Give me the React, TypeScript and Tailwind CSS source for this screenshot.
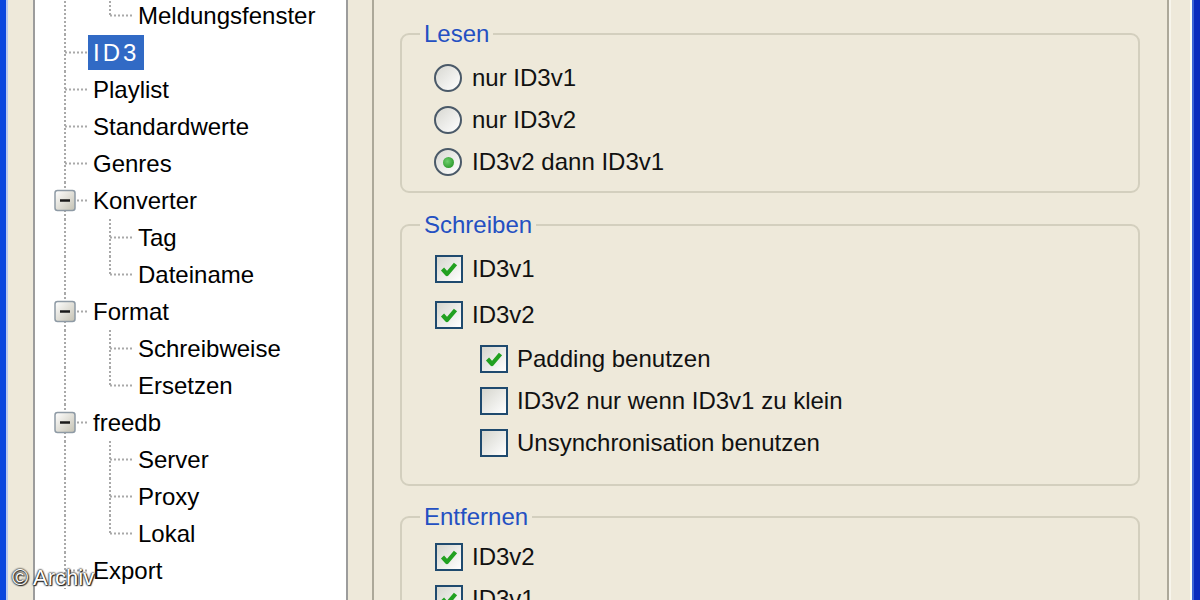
import type { ReactNode } from 'react'

type TreeNode = {
  label: string
  level: 0 | 1
  expander?: boolean
  last?: boolean
  selected?: boolean
}

const tree: TreeNode[] = [
  { label: 'Meldungsfenster', level: 1, last: true },
  { label: 'ID3', level: 0, selected: true },
  { label: 'Playlist', level: 0 },
  { label: 'Standardwerte', level: 0 },
  { label: 'Genres', level: 0 },
  { label: 'Konverter', level: 0, expander: true },
  { label: 'Tag', level: 1 },
  { label: 'Dateiname', level: 1, last: true },
  { label: 'Format', level: 0, expander: true },
  { label: 'Schreibweise', level: 1 },
  { label: 'Ersetzen', level: 1, last: true },
  { label: 'freedb', level: 0, expander: true },
  { label: 'Server', level: 1 },
  { label: 'Proxy', level: 1 },
  { label: 'Lokal', level: 1, last: true },
  { label: 'Export', level: 0 },
]

const dot = { stroke: '#a9a9a9', strokeWidth: 2, strokeDasharray: '2 2' }

// dotted connector lines + the [-] box, drawn per row
function TreeGuides({ node, id }: { node: TreeNode; id: number }) {
  const w = node.level === 0 ? 53 : 98
  return (
    <svg width={w} height={37} className="shrink-0">
      <defs>
        <linearGradient id={`exp-${id}`} x1="0" y1="0" x2="1" y2="1">
          <stop offset="0" stopColor="#ffffff" />
          <stop offset="1" stopColor="#c4c1b2" />
        </linearGradient>
      </defs>
      <line x1={30} y1={0} x2={30} y2={37} {...dot} />
      {node.level === 0 && <line x1={30} y1={18.5} x2={53} y2={18.5} {...dot} />}
      {node.level === 1 && (
        <>
          <line x1={75} y1={0} x2={75} y2={node.last ? 18.5 : 37} {...dot} />
          <line x1={75} y1={18.5} x2={98} y2={18.5} {...dot} />
        </>
      )}
      {node.expander && (
        <>
          <rect x={20} y={8.5} width={20} height={20} rx={2.5} fill={`url(#exp-${id})`} stroke="#8e9aa5" strokeWidth={1.5} />
          <line x1={25} y1={18.5} x2={35} y2={18.5} stroke="#1a1a1a" strokeWidth={2.5} />
        </>
      )}
    </svg>
  )
}

function Radio({ checked, label }: { checked?: boolean; label: string }) {
  return (
    <div className="flex h-[42px] items-center gap-[10px]">
      <span className="flex h-[28px] w-[28px] items-center justify-center rounded-full border-2 border-[#4a5968] bg-linear-to-br from-[#d8d8d2] to-white">
        {checked && (
          <span className="h-[11px] w-[11px] rounded-full bg-[radial-gradient(circle_at_40%_40%,#6fcf6f,#188a18)]" />
        )}
      </span>
      <span>{label}</span>
    </div>
  )
}

function Check({ checked, label, h = 'h-[42px]', indent }: { checked?: boolean; label: string; h?: string; indent?: boolean }) {
  return (
    <div className={`flex items-center gap-[9px] ${h} ${indent ? 'ml-[45px]' : ''}`}>
      <span className="flex h-[28px] w-[28px] items-center justify-center border-2 border-[#1f4a6e] bg-linear-to-br from-[#d6d6ce] to-white">
        {checked && (
          <svg width="22" height="22" viewBox="0 0 22 22">
            <path d="M4.5 11 L9 16 L17.5 6" fill="none" stroke="#21a121" strokeWidth="4.2" strokeLinejoin="round" />
          </svg>
        )}
      </span>
      <span>{label}</span>
    </div>
  )
}

function GroupBox({ title, className, children }: { title: string; className: string; children: ReactNode }) {
  return (
    <fieldset className="m-0 min-w-0 rounded-[9px] border-2 border-[#d3cfbe] p-0">
      <legend className="ml-[18px] px-[4px] text-[24px] leading-[26px] text-[#2450c2]">{title}</legend>
      <div className={className}>{children}</div>
    </fieldset>
  )
}

export default function App() {
  return (
    <div className="relative flex h-[600px] w-[1200px] overflow-hidden bg-[#eee9da] font-['Liberation_Sans',Arial,sans-serif] text-[24px] text-[#111]">
      {/* window frame left */}
      <div className="flex w-[8px] shrink-0">
        <div className="w-[6px] bg-[#0a46de]" />
        <div className="w-[2px] bg-[#b9c8ee]" />
      </div>
      <div className="w-[25px] shrink-0" />

      {/* tree view */}
      <div className="w-[315px] shrink-0 border-x-2 border-[#9c9c9c] bg-white">
        <div className="-mt-[3px]">
          {tree.map((node, i) => (
            <div key={node.label} className="flex h-[37px] items-center">
              <TreeGuides node={node} id={i} />
              <span
                className={`flex h-[35px] items-center whitespace-nowrap px-[5px] ${
                  node.selected ? 'bg-[#316ac5] tracking-[3px] text-white' : 'text-black'
                }`}
              >
                {node.label}
              </span>
            </div>
          ))}
        </div>
      </div>

      <div className="w-[24px] shrink-0" />

      {/* options page */}
      <div className="w-[797px] shrink-0 border-x-2 border-[#aca899] pl-[26px] pr-[27px] pt-[21px]">
        <GroupBox title="Lesen" className="pl-[32px] pt-[10px] pb-[8px]">
          <Radio label="nur ID3v1" />
          <Radio label="nur ID3v2" />
          <Radio label="ID3v2 dann ID3v1" checked />
        </GroupBox>

        <div className="mt-[19px]">
          <GroupBox title="Schreiben" className="pl-[33px] pt-[8px] pb-[20px]">
            <Check label="ID3v1" checked h="h-[46px]" />
            <Check label="ID3v2" checked h="h-[46px]" />
            <Check label="Padding benutzen" checked indent />
            <Check label="ID3v2 nur wenn ID3v1 zu klein" indent />
            <Check label="Unsynchronisation benutzen" indent />
          </GroupBox>
        </div>

        <div className="mt-[18px]">
          <GroupBox title="Entfernen" className="pl-[33px] pt-[6px] pb-[8px]">
            <Check label="ID3v2" checked />
            <Check label="ID3v1" checked />
          </GroupBox>
        </div>
      </div>

      <div className="w-[21px] shrink-0 border-l-2 border-[#f7f5ec]" />
      <div className="w-[2px] shrink-0 bg-[#fbfaf4]" />
      {/* window frame right */}
      <div className="w-[8px] shrink-0 border-l-2 border-[#3b63d6] bg-[#0a2bbd]" />

      <span className="absolute left-[12px] top-[565px] text-[22px] leading-[26px] text-white [text-shadow:0_0_2px_#000,0_0_2px_#000,1px_1px_1px_#333]">
        © Archiv
      </span>
    </div>
  )
}
